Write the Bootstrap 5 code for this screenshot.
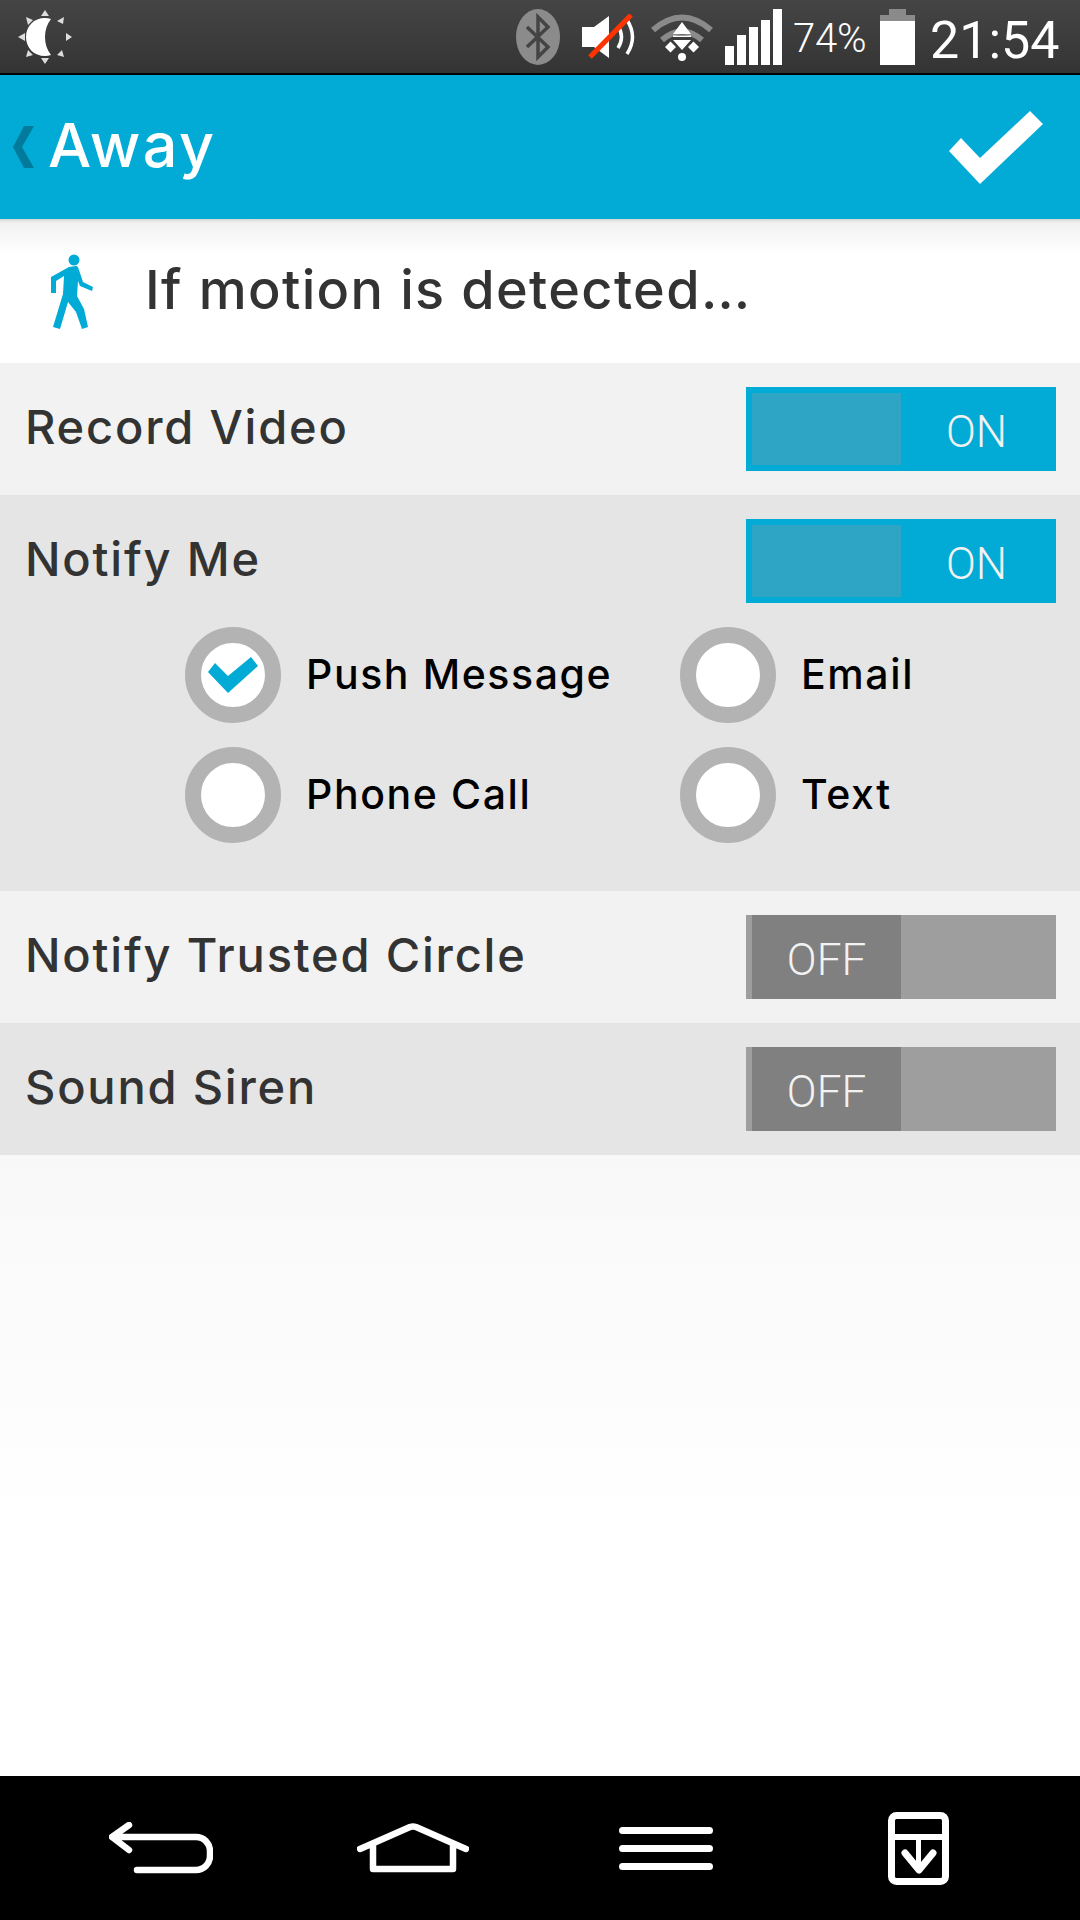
<!DOCTYPE html>
<html lang="en"><head><meta charset="utf-8"><title>Away</title>
<link href="https://cdn.jsdelivr.net/npm/bootstrap@5.3.0/dist/css/bootstrap.min.css" rel="stylesheet">
<style>
html,body{height:1920px;width:1080px;overflow:hidden;margin:0}
.app-shell{height:1920px;width:1080px;font-family:Inter,"Liberation Sans",sans-serif}
.status-strip{height:75px;background:linear-gradient(#454545,#343434);border-bottom:2px solid #000;color:#fff;font-family:Roboto,sans-serif;font-weight:300;padding-left:18px}
.status-strip svg{display:block;flex:none}
.st-bt{margin-left:444px}.st-sp{margin-left:22px}.st-wf{margin-left:12px}.st-sg{margin-left:11px}
.st-pc{margin-left:11px;font-size:40px;width:74px;white-space:nowrap;letter-spacing:-.2px;padding-top:5px}
.st-bat{margin-left:13px}.st-tm{margin-left:15px;font-size:52px;white-space:nowrap;font-weight:400;padding-top:8px;line-height:1}
.title-bar{height:144px;background:#02abd6;color:#fff;padding-left:13px;padding-right:37px}
.title-text{font-size:61px;font-weight:500;margin-left:14px;line-height:1;margin-top:-4px;letter-spacing:2.6px}
.motion-row{height:144px;background:linear-gradient(#d6d6d6 0,#f1f1f1 4px,#fff 36px);padding-left:51px}
.motion-text{font-size:54px;font-weight:500;color:#333;margin-left:52px;margin-top:-3px;letter-spacing:1.35px}
.set-row{height:132px;padding:0 24px 0 25px}
.tone-a{background:#f2f2f2}.tone-b{background:#e5e5e5}
.set-label{font-size:47px;font-weight:500;color:#333;letter-spacing:1.8px;margin-top:-3px}
.sw{width:310px;height:84px;display:flex;flex:none;font-family:Roboto,sans-serif;font-size:44px;font-weight:300;color:#f2f2f2;padding-left:6px}
.sw-on{background:#02abd6;padding-top:6px;padding-bottom:6px}
.sw-on .sw-thumb{background:#2fa5c6}
.sw-off{background:#9e9e9e}
.sw-off .sw-thumb{background:#808080}
.sw-thumb{width:149px;display:flex;align-items:center;justify-content:center;padding-top:5px}
.sw-rest{flex:1;display:flex;align-items:center;justify-content:center;padding-top:5px;padding-right:4px}
.opt-grid{display:grid;grid-template-columns:495px 1fr;row-gap:24px;padding:0 0 48px 185px}
.opt-item{display:flex;align-items:center;height:96px}
.opt-ring{width:96px;height:96px;border-radius:50%;background:#fff;border:16px solid #b3b3b3;flex:none;display:flex;align-items:center;justify-content:center}
.opt-label{font-size:41px;font-weight:500;color:#000;margin-left:25px;letter-spacing:1.6px}
.page-fill{flex:1;background:linear-gradient(#f8f8f8,#fff 60%)}
.nav-strip{height:144px;background:#000}
.nav-strip svg{display:block;flex:none}
.nv-a{margin-left:109px}.nv-b{margin-left:144px}.nv-c{margin-left:150px}.nv-d{margin-left:175px}
</style></head>
<body>
<div class="app-shell d-flex flex-column">
  <div class="status-strip d-flex align-items-center">
    <svg width="54" height="54" viewBox="0 0 54 54" fill="#fff"><path d="M27 8C16 8 8 16 8 27s8 19 19 19c2 0 4-.5 6-1-4-5-6-11-6-18s2-13 6-18c-2-.5-4-1-6-1z"/><path fill="#ddd" d="M27 0l4 6h-8zM27 54l-4-6h8zM0 27l7-4v8zM54 27l-6 4v-8zM8 7l7 3-5 5zM46 7l-1 7-6-3zM8 47l2-7 5 5zM46 47l-7-2 5-5z"/></svg>
    <svg class="st-bt" width="44" height="56" viewBox="0 0 44 56"><ellipse cx="22" cy="28" rx="22" ry="28" fill="#8b8b8b"/><path d="M11 18l21 20-10 10V8l10 10-21 20" fill="none" stroke="#444" stroke-width="3.5"/></svg>
    <svg class="st-sp" width="56" height="46" viewBox="0 0 56 46"><path fill="#fff" d="M0 13h12L27 2v42L12 33H0z"/><path d="M36 12q7 11 0 22M45 6q11 17 0 34" fill="none" stroke="#fff" stroke-width="3.500"/><path d="M8 43L49 1" stroke="#ff3300" stroke-width="5"/></svg>
    <svg class="st-wf" width="64" height="48" viewBox="0 0 64 48"><path d="M3 17q29-25 58 0M12 27q20-17 40 0" fill="none" stroke="#8a8a8a" stroke-width="6"/><path fill="#fff" d="M32 9l9 12H23zM23 27h18l-9 10zM20.500 28.500l5.500 5.500-5.500 5.500-5.500-5.500zM43.500 28.500l5.500 5.500-5.500 5.500-5.500-5.500z"/><rect x="23" y="22.500" width="18" height="1.500" fill="#fff"/><circle cx="32" cy="44" r="4" fill="#fff"/></svg>
    <svg class="st-sg" width="57" height="56" viewBox="0 0 57 56" fill="#fff"><path d="M0 37h9v19H0zM12 26h9v30h-9zM24 18h9v38h-9zM36 11h9v45h-9zM48 0h9v56h-9z"/></svg>
    <div class="st-pc">74%</div>
    <svg class="st-bat" width="35" height="56" viewBox="0 0 35 56"><path fill="#8a8a8a" d="M9 0h17v6h9v6H0V6h9z"/><path fill="#fff" d="M0 12h35v44H0z"/></svg>
    <div class="st-tm">21:54</div>
  </div>
  <div class="title-bar d-flex align-items-center">
    <svg width="21" height="42" viewBox="0 0 21 42" fill="#027a9c"><path d="M11 0h10L9 21l12 21H11L0 21z"/></svg>
    <div class="title-text">Away</div>
    <svg class="ms-auto" width="94" height="73" viewBox="0 0 94 73" fill="#fff"><path d="M0 40l12-13 19 20L81 0l13 13-63 60z"/></svg>
  </div>
  <div class="motion-row d-flex align-items-center">
    <svg width="42" height="75" viewBox="0 0 42 75" fill="#02abd6"><circle cx="23" cy="6" r="5.500"/><path d="M18 13L25 12Q27 12 28 16L32 28L42 33L41 37L29 32L27 27L26 42L33 55L37 73L31 75L25 58L17 48L9 75L2 73L12 40L13 22L5 27L5 39L0 39L0 23Z"/></svg>
    <div class="motion-text">If motion is detected…</div>
  </div>
  <div class="set-row tone-a d-flex align-items-center justify-content-between">
    <div class="set-label">Record Video</div>
    <div class="sw sw-on"><div class="sw-thumb"></div><div class="sw-rest">ON</div></div>
  </div>
  <div class="tone-b">
    <div class="set-row d-flex align-items-center justify-content-between">
      <div class="set-label">Notify Me</div>
      <div class="sw sw-on"><div class="sw-thumb"></div><div class="sw-rest">ON</div></div>
    </div>
    <div class="opt-grid">
      <div class="opt-item"><div class="opt-ring"><svg width="50" height="36" viewBox="0 0 50 36" fill="#02abd6"><path d="M0 15l7-9 13 13L43 0l7 9-30 27z"/></svg></div><div class="opt-label">Push Message</div></div>
      <div class="opt-item"><div class="opt-ring"></div><div class="opt-label">Email</div></div>
      <div class="opt-item"><div class="opt-ring"></div><div class="opt-label">Phone Call</div></div>
      <div class="opt-item"><div class="opt-ring"></div><div class="opt-label">Text</div></div>
    </div>
  </div>
  <div class="set-row tone-a d-flex align-items-center justify-content-between">
    <div class="set-label">Notify Trusted Circle</div>
    <div class="sw sw-off"><div class="sw-thumb">OFF</div><div class="sw-rest"></div></div>
  </div>
  <div class="set-row tone-b d-flex align-items-center justify-content-between">
    <div class="set-label">Sound Siren</div>
    <div class="sw sw-off"><div class="sw-thumb">OFF</div><div class="sw-rest"></div></div>
  </div>
  <div class="page-fill"></div>
  <div class="nav-strip d-flex align-items-center">
    <svg class="nv-a" width="104" height="52" viewBox="0 0 104 52" fill="none" stroke="#fff" stroke-width="6.500" stroke-linecap="round" stroke-linejoin="round"><path d="M20 3L3 15l17 13M3 15h84a14 14 0 0 1 14 14v5a14 14 0 0 1-14 14H28"/></svg>
    <svg class="nv-b" width="112" height="50" viewBox="0 0 112 50" fill="none" stroke="#fff" stroke-width="6.500" stroke-linecap="round" stroke-linejoin="round"><path d="M3 26L53 4q3-1 6 0l50 22M16 21v25h80V21"/></svg>
    <svg class="nv-c" width="94" height="43" viewBox="0 0 94 43" fill="none" stroke="#fff" stroke-width="7" stroke-linecap="round"><path d="M3.500 3.500h87M3.500 21.500h87M3.500 39.500h87"/></svg>
    <svg class="nv-d" width="61" height="73" viewBox="0 0 61 73" fill="none" stroke="#fff" stroke-width="7" stroke-linecap="round" stroke-linejoin="round"><rect x="3.500" y="3.500" width="54" height="66" rx="5"/><path d="M3.500 25h54" stroke-linecap="butt" stroke-width="6"/><path d="M30.500 26v31" stroke-linecap="butt" stroke-width="5"/><path d="M17 41l14 17 14-17"/></svg>
  </div>
</div>
<script src="https://cdn.jsdelivr.net/npm/bootstrap@5.3.0/dist/js/bootstrap.bundle.min.js"></script>
</body></html>
